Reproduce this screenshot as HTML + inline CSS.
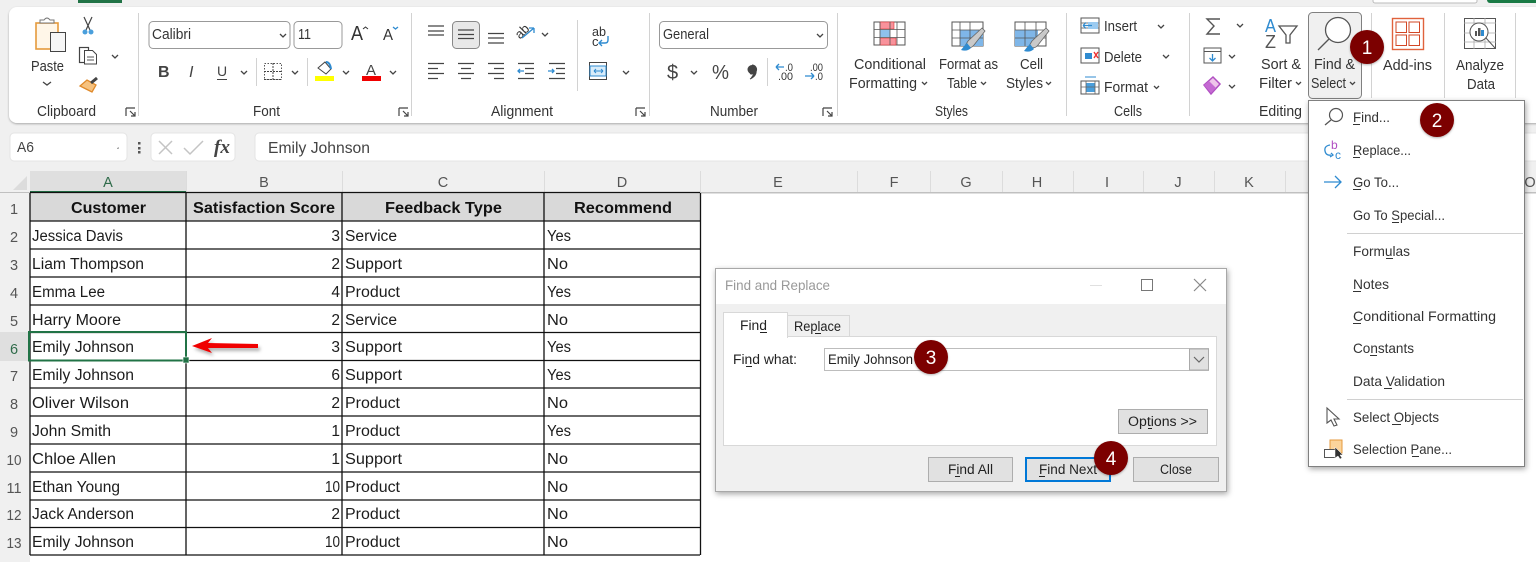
<!DOCTYPE html>
<html><head><meta charset="utf-8"><style>
html,body{margin:0;padding:0;background:#f0f0f0;width:1536px;height:562px;overflow:hidden}
svg{display:block}
text{font-family:"Liberation Sans",sans-serif;font-size:14.5px;fill:#333}
.g text{font-size:15.5px;fill:#1c1c1c}
.b text{font-size:15.5px;font-weight:bold;fill:#111}
.h text{font-size:14.5px;fill:#555;text-anchor:middle}
.m text{font-size:14px;fill:#333}
.d text{font-size:13.5px;fill:#222}
.n{fill:#fff;font-size:20px;text-anchor:middle}
.c{fill:none;stroke:#444;stroke-width:1.3}
.i{fill:none;stroke:#444;stroke-width:1.2}
</style></head><body>
<svg width="1536" height="562" viewBox="0 0 1536 562" xmlns="http://www.w3.org/2000/svg">
<defs><filter id="sh" x="-5%" y="-5%" width="110%" height="110%"><feDropShadow dx="1" dy="2" stdDeviation="3" flood-color="#000" flood-opacity=".35"/></filter>
<filter id="sr" x="-10%" y="-10%" width="125%" height="125%"><feDropShadow dx="0" dy="1" stdDeviation="1" flood-color="#000" flood-opacity=".3"/></filter>
<filter id="sa" x="-10%" y="-50%" width="125%" height="250%"><feDropShadow dx="2" dy="3" stdDeviation="1.5" flood-color="#000" flood-opacity=".3"/></filter></defs>

<rect width="1536" height="562" fill="#f0f0f0"/>
<rect x="78" y="0" width="44" height="3" fill="#217346"/>
<rect x="1373" y="-5" width="104" height="8" rx="2" fill="#fff" stroke="#bbb"/>
<rect x="1487" y="-5" width="60" height="8" rx="3" fill="#1a7a45"/>

<!-- ribbon -->
<rect x="9" y="7" width="1540" height="116" rx="8" fill="#fff" filter="url(#sr)"/>
<g fill="#d2d2d2">
<rect x="138" y="13" width="1" height="103"/><rect x="411" y="13" width="1" height="103"/><rect x="649" y="13" width="1" height="103"/><rect x="837" y="13" width="1" height="103"/><rect x="1066" y="13" width="1" height="103"/><rect x="1189" y="13" width="1" height="103"/><rect x="1371" y="13" width="1" height="85"/><rect x="1444" y="13" width="1" height="85"/><rect x="1515" y="13" width="1" height="85"/>
<rect x="256" y="58" width="1" height="28"/><rect x="307" y="58" width="1" height="28"/><rect x="577" y="20" width="1" height="71"/><rect x="767" y="58" width="1" height="28"/>
</g>

<!-- clipboard icons -->
<rect x="36" y="23" width="22" height="26" fill="#fff6e8" stroke="#e59a3c" stroke-width="1.6"/>
<path d="M40 23v-3h4q3-4 6 0h4v3z" fill="#fff" stroke="#777"/>
<rect x="50.500" y="32.500" width="15" height="19" fill="#f6f6f6" stroke="#444"/>
<path d="M84 17l6 13M92 17l-6 13" class="i"/><circle cx="85" cy="32" r="2.500" fill="#4a9fdc"/><circle cx="91" cy="32" r="2.500" fill="#4a9fdc"/>
<rect x="79.500" y="47.500" width="9" height="15" class="i" fill="#fff"/><path d="M84.500 50.500h8l4 4v9.500h-12z" fill="#fff" stroke="#444"/><path d="M87 57h7M87 60h7" stroke="#555"/>
<g transform="translate(0 5)"><path d="M86 84l-6-3 7-6 9 5-4 7z" fill="#f6c27f" stroke="#e08a2b" stroke-width="1.300"/><path d="M91 78l6-5" stroke="#444" stroke-width="3"/></g>
<path d="M112 55l3 3 3-3M43 82l4 3 4-3" class="c"/>
<text x="31" y="71" textLength="33" lengthAdjust="spacingAndGlyphs">Paste</text>
<text x="37" y="116" textLength="59" lengthAdjust="spacingAndGlyphs">Clipboard</text>
<path d="M126 108h9M126 108v8M130 111l5 5M135 112v4h-4" class="i" stroke-width="1"/>

<!-- font -->
<rect x="149" y="21.500" width="141" height="27" rx="4" fill="#fff" stroke="#999"/>
<text x="152" y="39" textLength="39" lengthAdjust="spacingAndGlyphs">Calibri</text>
<path d="M280 34l3 3 3-3M332 34l3 3 3-3" class="c"/>
<rect x="294" y="21.500" width="48" height="27" rx="4" fill="#fff" stroke="#999"/>
<text x="298" y="39" textLength="13" lengthAdjust="spacingAndGlyphs">11</text>
<text x="351" y="40" style="font-size:20px" textLength="12" lengthAdjust="spacingAndGlyphs">A</text>
<path d="M363 29l2.500-2 2.500 2" fill="none" stroke="#333"/>
<text x="383" y="40" style="font-size:16px" textLength="10" lengthAdjust="spacingAndGlyphs">A</text>
<path d="M393 27l2.500 2 2.500-2" fill="none" stroke="#2f8bd0" stroke-width="1.300"/>
<text x="158" y="77" style="font-size:16px;font-weight:bold;fill:#444">B</text>
<text x="189" y="77" style="font-size:16px;font-style:italic;fill:#444">I</text>
<text x="217" y="76" style="font-size:14px;fill:#444">U</text><rect x="217" y="79" width="10" height="1" fill="#444"/>
<path d="M241 71l3 3 3-3M292 71l3 3 3-3M343 71l3 3 3-3M390 71l3 3 3-3" class="c"/>
<rect x="264.500" y="63.500" width="17" height="16" fill="none" stroke="#555" stroke-dasharray="1.500 1.500"/><path d="M264 79.500h18M273 63v16M264 71.500h18" stroke="#444" stroke-dasharray="2 1" fill="none"/>
<path d="M318 68l7-6 6 7-5 5z" fill="#fff" stroke="#444"/><path d="M326 62q4 0 5 7" fill="none" stroke="#2f8bd0" stroke-width="2"/><rect x="315" y="76" width="19" height="5" fill="#ffff00"/>
<text x="366" y="75" style="font-size:15px;fill:#444">A</text><rect x="362" y="76" width="19" height="5" fill="#f00000"/>
<text x="253" y="116" textLength="27" lengthAdjust="spacingAndGlyphs">Font</text>
<path d="M399 108h9M399 108v8M403 111l5 5M408 112v4h-4" class="i" stroke-width="1"/>

<!-- alignment -->
<rect x="452.500" y="21.500" width="27" height="27" rx="4" fill="#e8e8e8" stroke="#888"/>
<path d="M428 26h16M428 31h16M428 35h16M458 30h16M458 34.500h16M458 38.500h16M488 33.500h16M488 38h16M488 43h16" class="i"/>
<path d="M428 63.500h16M428 68.500h10M428 73.500h16M428 78.500h10M458 63.500h16M461 68.500h10M458 73.500h16M461 78.500h10M488 63.500h16M494 68.500h10M488 73.500h16M494 78.500h10" class="i"/>
<text x="516" y="38" style="font-size:13px" transform="rotate(-45 520 34)">ab</text><path d="M522 38l12-10M534 28h-5M534 28v5" fill="none" stroke="#2f8bd0" stroke-width="1.300"/>
<path d="M542 33l3 3 3-3M623 71l3 3 3-3" class="c"/>
<path d="M518 63.500h16M525 68.500h9M525 73.500h9M518 78.500h16M549 63.500h16M556 68.500h9M556 73.500h9M549 78.500h16" class="i"/>
<path d="M524 71h-6M520 69l-2 2 2 2M548 71h6M552 69l2 2-2 2" fill="none" stroke="#2f8bd0" stroke-width="1.300"/>
<text x="592" y="36" style="font-size:13px" textLength="14" lengthAdjust="spacingAndGlyphs">ab</text><text x="592" y="46" style="font-size:13px">c</text>
<path d="M608 36v4q0 3-3 3h-6M602 40l-3 3 3 3" fill="none" stroke="#2f8bd0" stroke-width="1.400"/>
<rect x="589.500" y="62.500" width="17" height="17" fill="#fff" stroke="#444"/><rect x="590" y="66" width="16" height="10" fill="#d8ecfa" stroke="#2f8bd0"/><path d="M594 71h9M594 71l2-2M594 71l2 2M603 71l-2-2M603 71l-2 2" stroke="#2f8bd0" fill="none"/>
<text x="491" y="116" textLength="62" lengthAdjust="spacingAndGlyphs">Alignment</text>
<path d="M636 108h9M636 108v8M640 111l5 5M645 112v4h-4" class="i" stroke-width="1"/>

<!-- number -->
<rect x="659.500" y="21.500" width="168" height="27" rx="4" fill="#fff" stroke="#999"/>
<text x="663" y="39" textLength="46" lengthAdjust="spacingAndGlyphs">General</text>
<path d="M817 34l3 3 3-3M691 71l3 3 3-3" class="c"/>
<text x="667" y="79" style="font-size:20px;fill:#444">$</text>
<text x="712" y="79" style="font-size:20px;fill:#444" textLength="17" lengthAdjust="spacingAndGlyphs">%</text>
<path d="M752 65a4.500 4.500 0 1 1 -2 8.500q2.500 0 1 0M756 70q1 6-6 9" fill="#444" stroke="#444"/><circle cx="752" cy="69.500" r="4.500" fill="#444"/>
<text x="785" y="71" style="font-size:11px" textLength="8" lengthAdjust="spacingAndGlyphs">.0</text><text x="778" y="80" style="font-size:11px" textLength="15" lengthAdjust="spacingAndGlyphs">.00</text>
<path d="M776 67h8M776 67l3-3M776 67l3 3" fill="none" stroke="#2f8bd0" stroke-width="1.300"/>
<text x="810" y="71" style="font-size:11px" textLength="13" lengthAdjust="spacingAndGlyphs">.00</text><text x="815" y="80" style="font-size:11px" textLength="8" lengthAdjust="spacingAndGlyphs">.0</text>
<path d="M805 76h9M814 76l-3-3M814 76l-3 3" fill="none" stroke="#2f8bd0" stroke-width="1.300"/>
<text x="710" y="116" textLength="48" lengthAdjust="spacingAndGlyphs">Number</text>
<path d="M823 108h9M823 108v8M827 111l5 5M832 112v4h-4" class="i" stroke-width="1"/>

<!-- styles -->
<rect x="874" y="22" width="31" height="23" fill="#fff" stroke="#555"/>
<rect x="880" y="22" width="14" height="7" fill="#f8929b" stroke="#d33" stroke-width=".6"/><rect x="880" y="30" width="10" height="7" fill="#8fc1ec"/><rect x="880" y="38" width="16" height="7" fill="#f8929b" stroke="#d33" stroke-width=".6"/>
<path d="M874 29.500h31M874 37.500h31M880 22v23M890 22v23M897 22v23" stroke="#555" fill="none" stroke-width=".8"/>
<rect x="952" y="22" width="31" height="24" fill="#fff" stroke="#555"/><rect x="960" y="30" width="23" height="16" fill="#7fb6e8"/><path d="M952 30h31M952 38h31M960 22v24M970 22v24" stroke="#555" stroke-width=".8" fill="none"/>
<path d="M965 46l3-5 14-13 3 3-11 14q-4 5-9 1z" fill="#c9c9c9" stroke="#666" stroke-width=".8"/><path d="M961 50q6 2 10-2l-4-5q-3 3-6 7z" fill="#2f8bd0"/>
<rect x="1015" y="22" width="31" height="24" fill="#fff" stroke="#555"/><rect x="1015" y="30" width="23" height="16" fill="#7fb6e8"/><path d="M1015 30h31M1015 38h31M1025 22v24M1036 22v24" stroke="#555" stroke-width=".8" fill="none"/>
<path d="M1029 46l3-5 14-13 3 3-11 14q-4 5-9 1z" fill="#c9c9c9" stroke="#666" stroke-width=".8"/><path d="M1024 51q6 2 10-2l-4-5q-3 3-6 7z" fill="#2f8bd0"/>
<text x="854" y="69" textLength="72" lengthAdjust="spacingAndGlyphs">Conditional</text>
<text x="849" y="88" textLength="68" lengthAdjust="spacingAndGlyphs">Formatting</text><path d="M922 82l2.500 2.500 2.500-2.500M981 82l2.500 2.500 2.500-2.500M1046 82l2.500 2.500 2.500-2.500M1154 86l2.500 2.500 2.500-2.500M1296 82l2.500 2.500 2.500-2.500M1350 82l2.500 2.500 2.500-2.500" class="c"/>
<text x="939" y="69" textLength="59" lengthAdjust="spacingAndGlyphs">Format as</text>
<text x="947" y="88" textLength="30" lengthAdjust="spacingAndGlyphs">Table</text>
<text x="1020" y="69" textLength="23" lengthAdjust="spacingAndGlyphs">Cell</text>
<text x="1006" y="88" textLength="37" lengthAdjust="spacingAndGlyphs">Styles</text>
<text x="935" y="116" textLength="33" lengthAdjust="spacingAndGlyphs">Styles</text>

<!-- cells -->
<rect x="1081" y="18" width="18" height="15" fill="#fff" stroke="#555"/><path d="M1081 23h18M1081 28h18" stroke="#777"/><rect x="1088" y="22" width="10" height="7" fill="#9ccbf1"/><path d="M1083 25.500h9M1083 25.500l3-3M1083 25.500l3 3" stroke="#2f8bd0" fill="none" stroke-width="1.200"/>
<rect x="1081" y="48" width="18" height="15" fill="#fff" stroke="#555"/><rect x="1085" y="53" width="7" height="6" fill="#2f8bd0"/><path d="M1094 52l4 6M1098 52l-4 6" stroke="#e33" stroke-width="1.400"/>
<rect x="1081" y="81" width="18" height="13" fill="#fff" stroke="#555"/><rect x="1086" y="83" width="9" height="9" fill="#4a9fdc"/><path d="M1085 77h11" stroke="#2f8bd0"/><path d="M1081 87h18M1086 81v13M1095 81v13" stroke="#666" stroke-width=".8"/>
<text x="1104" y="31" textLength="33" lengthAdjust="spacingAndGlyphs">Insert</text>
<text x="1104" y="62" textLength="38" lengthAdjust="spacingAndGlyphs">Delete</text>
<text x="1104" y="92" textLength="44" lengthAdjust="spacingAndGlyphs">Format</text>
<path d="M1158 25l3 3 3-3M1163 55l3 3 3-3" class="c"/>
<text x="1114" y="116" textLength="28" lengthAdjust="spacingAndGlyphs">Cells</text>

<!-- editing -->
<path d="M1220 19h-13l7 7-7 8h13" fill="none" stroke="#555" stroke-width="1.400"/>
<path d="M1237 24l3 3 3-3M1229 55l3 3 3-3M1229 85l3 3 3-3" class="c"/>
<rect x="1204" y="48" width="17" height="15" fill="#fff" stroke="#555"/><path d="M1204 51.500h17" stroke="#555"/><path d="M1212.500 54v7M1209.500 58l3 3 3-3" fill="none" stroke="#2f8bd0" stroke-width="1.300"/>
<path d="M1204 85l9-8 7 7-9 10z" fill="#eec5ea" stroke="#b04fc2" stroke-width="1.500"/><path d="M1204 85l7 8 5-5-7-7z" fill="#c46ad2"/>
<text x="1265" y="32" style="font-size:18px;fill:#2f8bd0" textLength="11" lengthAdjust="spacingAndGlyphs">A</text><text x="1265" y="48" style="font-size:18px;fill:#555" textLength="11" lengthAdjust="spacingAndGlyphs">Z</text>
<path d="M1279 26h18l-7 9v8h-4v-8z" fill="#fff" stroke="#555" stroke-width="1.300"/>
<text x="1261" y="69" textLength="40" lengthAdjust="spacingAndGlyphs">Sort &amp;</text>
<text x="1259" y="88" textLength="33" lengthAdjust="spacingAndGlyphs">Filter</text>
<text x="1259" y="116" textLength="43" lengthAdjust="spacingAndGlyphs">Editing</text>
<rect x="1308.500" y="12.500" width="53" height="86" rx="4" fill="#f0f0f0" stroke="#808080"/>
<circle cx="1338" cy="30" r="12.500" fill="#fff" stroke="#555" stroke-width="1.300"/><path d="M1329 39l-11 11" stroke="#555" stroke-width="1.300"/>
<text x="1314" y="69" textLength="41" lengthAdjust="spacingAndGlyphs">Find &amp;</text>
<text x="1311" y="88" textLength="35" lengthAdjust="spacingAndGlyphs">Select</text>
<path d="M1350 82l2.500 2.500 2.500-2.500" class="c"/>

<!-- add-ins / analyze -->
<rect x="1392.500" y="18.500" width="31" height="31" fill="#fff" stroke="#e0623c" stroke-width="1.400"/><rect x="1396" y="22" width="10.500" height="10.500" fill="#fff" stroke="#d24726"/><rect x="1409" y="22" width="10.500" height="10.500" fill="#fff" stroke="#d24726"/><rect x="1396" y="35" width="10.500" height="10.500" fill="#fff" stroke="#d24726"/><rect x="1409" y="35" width="10.500" height="10.500" fill="#fff" stroke="#d24726"/>
<text x="1383" y="70" textLength="49" lengthAdjust="spacingAndGlyphs">Add-ins</text>
<rect x="1464.500" y="18.500" width="31" height="30" fill="#fff" stroke="#555"/><path d="M1464 23h32M1464 33h32M1464 42h32M1474 18v31M1485 18v31" stroke="#aaa" stroke-width=".8"/>
<circle cx="1479" cy="32" r="9" fill="#fff" stroke="#555"/><rect x="1475" y="31" width="2" height="5" fill="#555"/><rect x="1478" y="28" width="2.500" height="8" fill="#555"/><rect x="1481" y="30" width="3" height="6" fill="#2f8bd0"/><path d="M1486 38l9 10" stroke="#555"/>
<text x="1456" y="70" textLength="48" lengthAdjust="spacingAndGlyphs">Analyze</text>
<text x="1467" y="89" textLength="28" lengthAdjust="spacingAndGlyphs">Data</text>

<!-- formula bar -->
<rect x="10" y="133" width="117" height="28" rx="4" fill="#fff" stroke="#e4e4e4"/>
<text x="17" y="152" style="font-size:15px;fill:#444" textLength="17" lengthAdjust="spacingAndGlyphs">A6</text>
<path d="M117 148.500l1.500-1.500v2z" fill="#555"/>
<rect x="138" y="142" width="2.500" height="2.500" fill="#555"/><rect x="138" y="147" width="2.500" height="2.500" fill="#555"/><rect x="138" y="151" width="2.500" height="2.500" fill="#555"/>
<rect x="151" y="133" width="84" height="28" rx="4" fill="#fff" stroke="#e4e4e4"/>
<path d="M159 141l13 13M172 141l-13 13M184 148l6 6 13-13" fill="none" stroke="#c4c4c4" stroke-width="1.500"/>
<text x="214" y="153" style="font-family:'Liberation Serif',serif;font-style:italic;font-weight:bold;font-size:19px;fill:#444" textLength="16" lengthAdjust="spacingAndGlyphs">fx</text>
<rect x="255" y="133" width="1290" height="28" rx="4" fill="#fff" stroke="#e4e4e4"/>
<text x="268" y="153" style="font-size:15.500px;fill:#444" textLength="102" lengthAdjust="spacingAndGlyphs">Emily Johnson</text>

<!-- sheet -->
<rect x="0" y="193" width="1536" height="369" fill="#fff"/>
<rect x="0" y="171" width="1536" height="22" fill="#f0f0f0"/>
<rect x="0" y="192" width="1536" height="1.500" fill="#c0c0c0"/>
<rect x="0" y="193" width="30" height="369" fill="#f0f0f0"/>
<path d="M13 190l14-14v14z" fill="#dcdcdc"/>
<rect x="30" y="171" width="156" height="21" fill="#dfdfdf"/>
<rect x="30" y="191" width="156" height="2" fill="#217346"/>
<g fill="#dcdcdc"><rect x="342" y="171" width="1" height="21"/><rect x="544" y="171" width="1" height="21"/><rect x="700" y="171" width="1" height="21"/><rect x="857" y="171" width="1" height="21"/><rect x="930" y="171" width="1" height="21"/><rect x="1002" y="171" width="1" height="21"/><rect x="1073" y="171" width="1" height="21"/><rect x="1143" y="171" width="1" height="21"/><rect x="1214" y="171" width="1" height="21"/><rect x="1285" y="171" width="1" height="21"/><rect x="186" y="171" width="1" height="21"/></g>
<g class="h">
<text x="108" y="187" style="fill:#2f6b4a">A</text><text x="264" y="187">B</text><text x="443" y="187">C</text><text x="622" y="187">D</text><text x="778" y="187">E</text><text x="894" y="187">F</text><text x="966" y="187">G</text><text x="1037" y="187">H</text><text x="1107" y="187">I</text><text x="1178" y="187">J</text><text x="1249" y="187">K</text><text x="1530" y="187">O</text>
</g>
<rect x="0" y="332" width="30" height="29" fill="#dfdfdf"/>
<g class="h">
<text x="14" y="214">1</text><text x="14" y="242">2</text><text x="14" y="270">3</text><text x="14" y="298">4</text><text x="14" y="326">5</text><text x="14" y="354" style="fill:#2f6b4a">6</text><text x="14" y="381">7</text><text x="14" y="409">8</text><text x="14" y="437">9</text><text x="14" y="465" textLength="15" lengthAdjust="spacingAndGlyphs">10</text><text x="14" y="493" textLength="15" lengthAdjust="spacingAndGlyphs">11</text><text x="14" y="520" textLength="15" lengthAdjust="spacingAndGlyphs">12</text><text x="14" y="548" textLength="15" lengthAdjust="spacingAndGlyphs">13</text>
</g>
<rect x="30" y="193" width="670" height="28" fill="#d9d9d9"/>
<g fill="none" stroke="#111" stroke-width="1.300">
<path d="M30 192.500h670M30 221h670M30 249h670M30 277h670M30 305h670M30 332.500h670M30 360.500h670M30 388h670M30 416h670M30 444h670M30 472h670M30 500h670M30 527.500h670M30 555h670"/>
<path d="M30 193v362M186 193v362M342 193v362M544 193v362M700.500 193v362"/>
</g>
<rect x="29" y="332" width="157" height="28.500" fill="none" stroke="#217346" stroke-width="2"/>
<rect x="183" y="357" width="6" height="6" fill="#217346" stroke="#fff" stroke-width=".6"/>

<g class="b">
<text x="71" y="213" textLength="75" lengthAdjust="spacingAndGlyphs">Customer</text>
<text x="193" y="213" textLength="142" lengthAdjust="spacingAndGlyphs">Satisfaction Score</text>
<text x="385" y="213" textLength="117" lengthAdjust="spacingAndGlyphs">Feedback Type</text>
<text x="574" y="213" textLength="98" lengthAdjust="spacingAndGlyphs">Recommend</text>
</g>
<g class="g">
<text x="32" y="241" textLength="91" lengthAdjust="spacingAndGlyphs">Jessica Davis</text>
<text x="32" y="269" textLength="112" lengthAdjust="spacingAndGlyphs">Liam Thompson</text>
<text x="32" y="297" textLength="73" lengthAdjust="spacingAndGlyphs">Emma Lee</text>
<text x="32" y="325" textLength="89" lengthAdjust="spacingAndGlyphs">Harry Moore</text>
<text x="32" y="352" textLength="102" lengthAdjust="spacingAndGlyphs">Emily Johnson</text>
<text x="32" y="380" textLength="102" lengthAdjust="spacingAndGlyphs">Emily Johnson</text>
<text x="32" y="408" textLength="97" lengthAdjust="spacingAndGlyphs">Oliver Wilson</text>
<text x="32" y="436" textLength="79" lengthAdjust="spacingAndGlyphs">John Smith</text>
<text x="32" y="464" textLength="84" lengthAdjust="spacingAndGlyphs">Chloe Allen</text>
<text x="32" y="492" textLength="88" lengthAdjust="spacingAndGlyphs">Ethan Young</text>
<text x="32" y="519" textLength="102" lengthAdjust="spacingAndGlyphs">Jack Anderson</text>
<text x="32" y="547" textLength="102" lengthAdjust="spacingAndGlyphs">Emily Johnson</text>
<g text-anchor="end">
<text x="340" y="241">3</text><text x="340" y="269">2</text><text x="340" y="297">4</text><text x="340" y="325">2</text><text x="340" y="352">3</text><text x="340" y="380">6</text><text x="340" y="408">2</text><text x="340" y="436">1</text><text x="340" y="464">1</text><text x="340" y="492" textLength="15" lengthAdjust="spacingAndGlyphs">10</text><text x="340" y="519">2</text><text x="340" y="547" textLength="15" lengthAdjust="spacingAndGlyphs">10</text>
</g>
<text x="345" y="241" textLength="52" lengthAdjust="spacingAndGlyphs">Service</text>
<text x="345" y="269" textLength="57" lengthAdjust="spacingAndGlyphs">Support</text>
<text x="345" y="297" textLength="55" lengthAdjust="spacingAndGlyphs">Product</text>
<text x="345" y="325" textLength="52" lengthAdjust="spacingAndGlyphs">Service</text>
<text x="345" y="352" textLength="57" lengthAdjust="spacingAndGlyphs">Support</text>
<text x="345" y="380" textLength="57" lengthAdjust="spacingAndGlyphs">Support</text>
<text x="345" y="408" textLength="55" lengthAdjust="spacingAndGlyphs">Product</text>
<text x="345" y="436" textLength="55" lengthAdjust="spacingAndGlyphs">Product</text>
<text x="345" y="464" textLength="57" lengthAdjust="spacingAndGlyphs">Support</text>
<text x="345" y="492" textLength="55" lengthAdjust="spacingAndGlyphs">Product</text>
<text x="345" y="519" textLength="55" lengthAdjust="spacingAndGlyphs">Product</text>
<text x="345" y="547" textLength="55" lengthAdjust="spacingAndGlyphs">Product</text>
<text x="547" y="241" textLength="24" lengthAdjust="spacingAndGlyphs">Yes</text>
<text x="547" y="269" textLength="21" lengthAdjust="spacingAndGlyphs">No</text>
<text x="547" y="297" textLength="24" lengthAdjust="spacingAndGlyphs">Yes</text>
<text x="547" y="325" textLength="21" lengthAdjust="spacingAndGlyphs">No</text>
<text x="547" y="352" textLength="24" lengthAdjust="spacingAndGlyphs">Yes</text>
<text x="547" y="380" textLength="24" lengthAdjust="spacingAndGlyphs">Yes</text>
<text x="547" y="408" textLength="21" lengthAdjust="spacingAndGlyphs">No</text>
<text x="547" y="436" textLength="24" lengthAdjust="spacingAndGlyphs">Yes</text>
<text x="547" y="464" textLength="21" lengthAdjust="spacingAndGlyphs">No</text>
<text x="547" y="492" textLength="21" lengthAdjust="spacingAndGlyphs">No</text>
<text x="547" y="519" textLength="21" lengthAdjust="spacingAndGlyphs">No</text>
<text x="547" y="547" textLength="21" lengthAdjust="spacingAndGlyphs">No</text>
</g>
<path d="M192 346L212 338L208 343L258 344L258 348L208 348L212 353Z" fill="#f00000" filter="url(#sa)"/>

<!-- menu -->
<rect x="1308.500" y="100.500" width="216" height="366" fill="#fff" stroke="#808080" filter="url(#sh)"/>
<g class="m">
<text x="1353" y="122" textLength="37" lengthAdjust="spacingAndGlyphs">Find...</text>
<text x="1353" y="155" textLength="58" lengthAdjust="spacingAndGlyphs">Replace...</text>
<text x="1353" y="187" textLength="46" lengthAdjust="spacingAndGlyphs">Go To...</text>
<text x="1353" y="220" textLength="92" lengthAdjust="spacingAndGlyphs">Go To Special...</text>
<text x="1353" y="256" textLength="57" lengthAdjust="spacingAndGlyphs">Formulas</text>
<text x="1353" y="289" textLength="36" lengthAdjust="spacingAndGlyphs">Notes</text>
<text x="1353" y="321" textLength="143" lengthAdjust="spacingAndGlyphs">Conditional Formatting</text>
<text x="1353" y="353" textLength="61" lengthAdjust="spacingAndGlyphs">Constants</text>
<text x="1353" y="386" textLength="92" lengthAdjust="spacingAndGlyphs">Data Validation</text>
<text x="1353" y="422" textLength="86" lengthAdjust="spacingAndGlyphs">Select Objects</text>
<text x="1353" y="454" textLength="99" lengthAdjust="spacingAndGlyphs">Selection Pane...</text>
</g>
<g fill="#333">
<rect x="1353" y="124" width="7" height="1"/><rect x="1353" y="157" width="7" height="1"/><rect x="1353" y="189" width="8" height="1"/><rect x="1392" y="222" width="7" height="1"/><rect x="1386" y="258" width="7" height="1"/><rect x="1353" y="291" width="8" height="1"/><rect x="1353" y="323" width="8" height="1"/><rect x="1370" y="355" width="7" height="1"/><rect x="1384" y="388" width="8" height="1"/><rect x="1392" y="424" width="9" height="1"/><rect x="1412" y="456" width="7" height="1"/>
</g>
<rect x="1347" y="233" width="176" height="1" fill="#d0d0d0"/><rect x="1347" y="399" width="176" height="1" fill="#d0d0d0"/>
<circle cx="1336" cy="115" r="6.500" fill="#fff" stroke="#555" stroke-width="1.200"/><path d="M1331 120l-6 5" stroke="#555" stroke-width="1.300"/>
<text x="1331" y="149" style="font-size:12px;fill:#b04fc2">b</text><text x="1335" y="159" style="font-size:12px;fill:#2f8bd0">c</text>
<path d="M1330 145q-6 1-5 6t6 4M1331 153l2 2-3 2" fill="none" stroke="#2f8bd0" stroke-width="1.300"/>
<path d="M1324 182h17M1335 176l6 6-6 6" fill="none" stroke="#2f8bd0" stroke-width="1.300"/>
<path d="M1327 408l0 15 4-3 3 6 3-1-3-6 5 0z" fill="#fff" stroke="#555" stroke-width="1.100"/>
<rect x="1330" y="440" width="12" height="13" fill="#fbd49b" stroke="#e59a3c"/><rect x="1324.500" y="449.500" width="11" height="8" fill="#fff" stroke="#555"/><path d="M1335 447l0 11 3-2 2 3 2-1-2-3 3 0z" fill="#333" stroke="#fff" stroke-width=".5"/>

<!-- dialog -->
<rect x="715.500" y="268.500" width="511" height="223" fill="#f0f0f0" stroke="#a8a8a8" filter="url(#sh)"/>
<rect x="716" y="269" width="510" height="35" fill="#fff"/>
<text x="725" y="290" style="font-size:14px;fill:#999" textLength="105" lengthAdjust="spacingAndGlyphs">Find and Replace</text>
<rect x="1090" y="285" width="12" height="1" fill="#e0e0e0"/>
<rect x="1141.500" y="279.500" width="11" height="11" fill="none" stroke="#777"/>
<path d="M1194 279l12 12M1206 279l-12 12" stroke="#888" stroke-width="1.200"/>
<rect x="723.500" y="336.500" width="493" height="109" fill="#fff" stroke="#d8d8d8"/>
<rect x="787.500" y="315.500" width="62" height="21" fill="#f0f0f0" stroke="#d8d8d8"/>
<rect x="723.500" y="312.500" width="64" height="25" fill="#fff" stroke="#d8d8d8"/><rect x="724" y="335" width="63" height="3" fill="#fff"/>
<rect x="824.500" y="348.500" width="384" height="22" fill="#fff" stroke="#bdbdbd"/>
<rect x="1189.500" y="349" width="19" height="21" fill="#e1e1e1" stroke="#aaa"/>
<path d="M1194 357l5 5 5-5" fill="none" stroke="#666" stroke-width="1.200"/>
<g fill="#e1e1e1" stroke="#adadad"><rect x="1118.500" y="409.500" width="89" height="24"/><rect x="928.500" y="457.500" width="84" height="24"/><rect x="1133.500" y="457.500" width="85" height="24"/></g>
<rect x="1026" y="458" width="84" height="23" fill="#e1e1e1" stroke="#0078d7" stroke-width="2"/>
<g class="d">
<text x="740" y="330" textLength="27" lengthAdjust="spacingAndGlyphs">Find</text>
<text x="794" y="331" textLength="47" lengthAdjust="spacingAndGlyphs">Replace</text>
<text x="733" y="364" textLength="64" lengthAdjust="spacingAndGlyphs">Find what:</text>
<text x="828" y="364" textLength="85" lengthAdjust="spacingAndGlyphs">Emily Johnson</text>
<text x="1128" y="426" textLength="69" lengthAdjust="spacingAndGlyphs">Options &gt;&gt;</text>
<text x="948" y="474" textLength="45" lengthAdjust="spacingAndGlyphs">Find All</text>
<text x="1039" y="474" textLength="58" lengthAdjust="spacingAndGlyphs">Find Next</text>
<text x="1160" y="474" textLength="32" lengthAdjust="spacingAndGlyphs">Close</text>
</g>
<g fill="#222"><rect x="760" y="332" width="7" height="1"/><rect x="815" y="333" width="6" height="1"/><rect x="746" y="366" width="6" height="1"/><rect x="1148" y="428" width="4" height="1"/><rect x="955" y="476" width="5" height="1"/><rect x="1039" y="476" width="6" height="1"/></g>

<!-- badges -->
<g fill="#7b0000" filter="url(#sr)"><circle cx="1367" cy="47" r="17"/><circle cx="1437" cy="120" r="17"/><circle cx="931" cy="357" r="17"/><circle cx="1111" cy="458" r="17"/></g>
<text class="n" x="1367" y="54" style="fill:#fff;font-size:19px;text-anchor:middle">1</text>
<text class="n" x="1437" y="127" style="fill:#fff;font-size:19px;text-anchor:middle">2</text>
<text class="n" x="931" y="364" style="fill:#fff;font-size:19px;text-anchor:middle">3</text>
<text class="n" x="1111" y="465" style="fill:#fff;font-size:19px;text-anchor:middle">4</text>
</svg>
</body></html>
